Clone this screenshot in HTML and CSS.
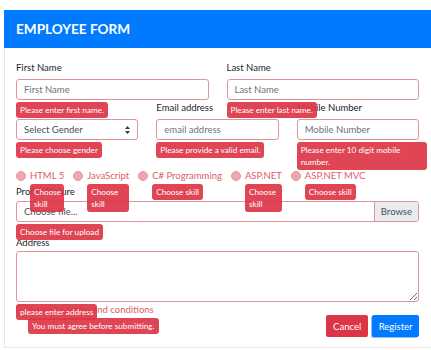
FILE: index.html
```html
<!DOCTYPE html>
<html>
<head>
<meta charset="utf-8">
<link rel="stylesheet" href="styles.css">
</head>
<body>
<div class="card">
  <div class="card-header">EMPLOYEE FORM</div>
  <form class="card-body">
    <div class="row row-2">
      <div class="group">
        <label class="label">First Name</label>
        <div class="field">
          <input class="input" placeholder="First Name">
          <div class="tip">Please enter first name.</div>
        </div>
      </div>
      <div class="group">
        <label class="label">Last Name</label>
        <div class="field">
          <input class="input" placeholder="Last Name">
          <div class="tip">Please enter last name.</div>
        </div>
      </div>
    </div>

    <div class="row row-3">
      <div class="group">
        <label class="label">&nbsp;</label>
        <div class="field">
          <div class="input select">
            <span>Select Gender</span>
            <svg class="arrows" width="5" height="8" viewBox="0 0 5 8"><path d="M2.5 0L5 3H0z M2.5 8L0 5h5z" fill="#343a40"/></svg>
          </div>
          <div class="tip">Please choose gender</div>
        </div>
      </div>
      <div class="group">
        <label class="label">Email address</label>
        <div class="field">
          <input class="input" placeholder="email address">
          <div class="tip">Please provide a valid email.</div>
        </div>
      </div>
      <div class="group">
        <label class="label">Mobile Number</label>
        <div class="field">
          <input class="input" placeholder="Mobile Number">
          <div class="tip tip-wide">Please enter 10 digit mobile number.</div>
        </div>
      </div>
    </div>

    <div class="radios">
      <div class="radio"><span class="dot"></span><span class="rtext">HTML 5<span class="tip tip-skill">Choose skill</span></span></div>
      <div class="radio"><span class="dot"></span><span class="rtext">JavaScript<span class="tip tip-skill">Choose skill</span></span></div>
      <div class="radio"><span class="dot"></span><span class="rtext">C# Programming<span class="tip tip-skill">Choose skill</span></span></div>
      <div class="radio"><span class="dot"></span><span class="rtext">ASP.NET<span class="tip tip-skill">Choose skill</span></span></div>
      <div class="radio"><span class="dot"></span><span class="rtext">ASP.NET MVC<span class="tip tip-skill">Choose skill</span></span></div>
    </div>

    <label class="label label-file">Profile Picture</label>
    <div class="field">
      <div class="input file">
        <span class="file-text">Choose file...</span>
        <span class="browse">Browse</span>
      </div>
      <div class="tip">Choose file for upload</div>
    </div>

    <label class="label label-address">Address</label>
    <div class="field">
      <textarea class="input textarea"></textarea>
      <div class="tip">please enter address</div>
    </div>

    <div class="footer">
      <div class="check">
        <span class="box"></span>
        <span class="ctext">Agree to terms and conditions<span class="tip tip-check">You must agree before submitting.</span></span>
      </div>
      <div class="buttons">
        <button type="button" class="btn btn-cancel">Cancel</button>
        <button type="button" class="btn btn-register">Register</button>
      </div>
    </div>
  </form>
</div>
</body>
</html>
```
FILE: styles.css
```css
html, body {
  margin: 0;
  padding: 0;
  background: #fff;
  overflow: hidden;
}
body {
  font-family: Lato, "Open Sans", sans-serif;
  color: #212529;
  font-size: 9.5px;
}
.card {
  margin: 10px 0 0 4px;
  width: 428px;
  height: 338px;
  box-sizing: border-box;
  border: 1px solid #e8e8e8;
  border-top: none;
}
.card-header {
  height: 38px;
  margin-left: -1px;
  background: #007bff;
  color: #fff;
  font-weight: 700;
  font-size: 13.6px;
  display: flex;
  align-items: center;
  padding-left: 12px;
}
.card-body {
  display: block;
  padding: 13px 12px 0 11px;
  margin: 0;
}
.row {
  display: grid;
  column-gap: 18px;
}
.row-2 { grid-template-columns: 1fr 1fr; }
.row-3 { grid-template-columns: 1fr 1fr 1fr; margin-top: 1px; }
.label {
  display: block;
  line-height: 14px;
  height: 14px;
  margin-bottom: 4px;
  white-space: nowrap;
}
.field {
  position: relative;
}
.input {
  display: block;
  box-sizing: border-box;
  width: 100%;
  height: 21px;
  margin: 0;
  border: 1px solid #e4939c;
  border-radius: 3px;
  padding: 0 7px;
  font-family: Lato, "Open Sans", sans-serif;
  font-size: 9.5px;
  color: #495057;
  background: #fff;
  outline: none;
}
.input::placeholder { color: #6c757d; }
.select {
  display: flex;
  align-items: center;
  justify-content: space-between;
  padding-right: 7px;
}
.arrows { display: block; }
.tip {
  position: absolute;
  top: 100%;
  left: 0;
  margin-top: 2px;
  z-index: 5;
  padding: 2px 4px;
  font-size: 8.2px;
  line-height: 12px;
  color: #fff;
  background: rgba(220, 53, 69, 0.92);
  border-radius: 3px;
  white-space: nowrap;
}
.tip-wide {
  white-space: normal;
  width: 122px;
}
.radios {
  display: flex;
  margin-top: 29px;
  height: 14px;
  align-items: center;
}
.radio {
  display: flex;
  align-items: center;
  margin-right: 9px;
}
.dot {
  width: 10px;
  height: 10px;
  box-sizing: border-box;
  border-radius: 50%;
  background: #eea7ae;
  border: 1px solid #e5959d;
  margin-right: 4px;
}
.rtext {
  position: relative;
  color: #de5b69;
  line-height: 14px;
  white-space: nowrap;
}
.tip-skill {
  margin-top: 1px;
  white-space: normal;
  width: max-content;
  max-width: 100%;
  box-sizing: border-box;
}
.label-file {
  margin-top: 2px;
  margin-bottom: 2px;
}
.file {
  display: flex;
  align-items: stretch;
  padding: 0;
  overflow: hidden;
}
.file-text {
  flex: 1;
  display: flex;
  align-items: center;
  padding-left: 7px;
}
.browse {
  display: flex;
  align-items: center;
  padding: 0 6px;
  background: #e9ecef;
  border-left: 1px solid #e4939c;
  color: #495057;
}
.label-address {
  margin-top: 14px;
  margin-bottom: 1px;
}
.textarea {
  height: 51px;
  resize: vertical;
  padding: 4px 7px;
}
.footer {
  display: flex;
  justify-content: space-between;
  align-items: flex-start;
}
.check {
  display: flex;
  align-items: center;
  margin-top: 1px;
  height: 14px;
}
.box {
  width: 10px;
  height: 10px;
  box-sizing: border-box;
  border-radius: 2px;
  border: 1px solid #e4939c;
  margin-right: 2px;
}
.ctext {
  position: relative;
  color: #de5b69;
  line-height: 14px;
  white-space: nowrap;
}
.tip-check {
  margin-top: 1px;
}
.buttons {
  display: flex;
  gap: 4px;
  margin-top: 13px;
}
.btn {
  height: 22px;
  border: none;
  border-radius: 2px;
  padding: 0 7px;
  color: #fff;
  font-family: Lato, "Open Sans", sans-serif;
  font-size: 9.5px;
  margin: 0;
}
.btn-cancel { background: #dc3545; }
.btn-register {
  background: #007bff;
  padding: 0 6.5px;
  box-shadow: -1px 1px 0 rgba(0, 123, 255, 0.45);
}
```
